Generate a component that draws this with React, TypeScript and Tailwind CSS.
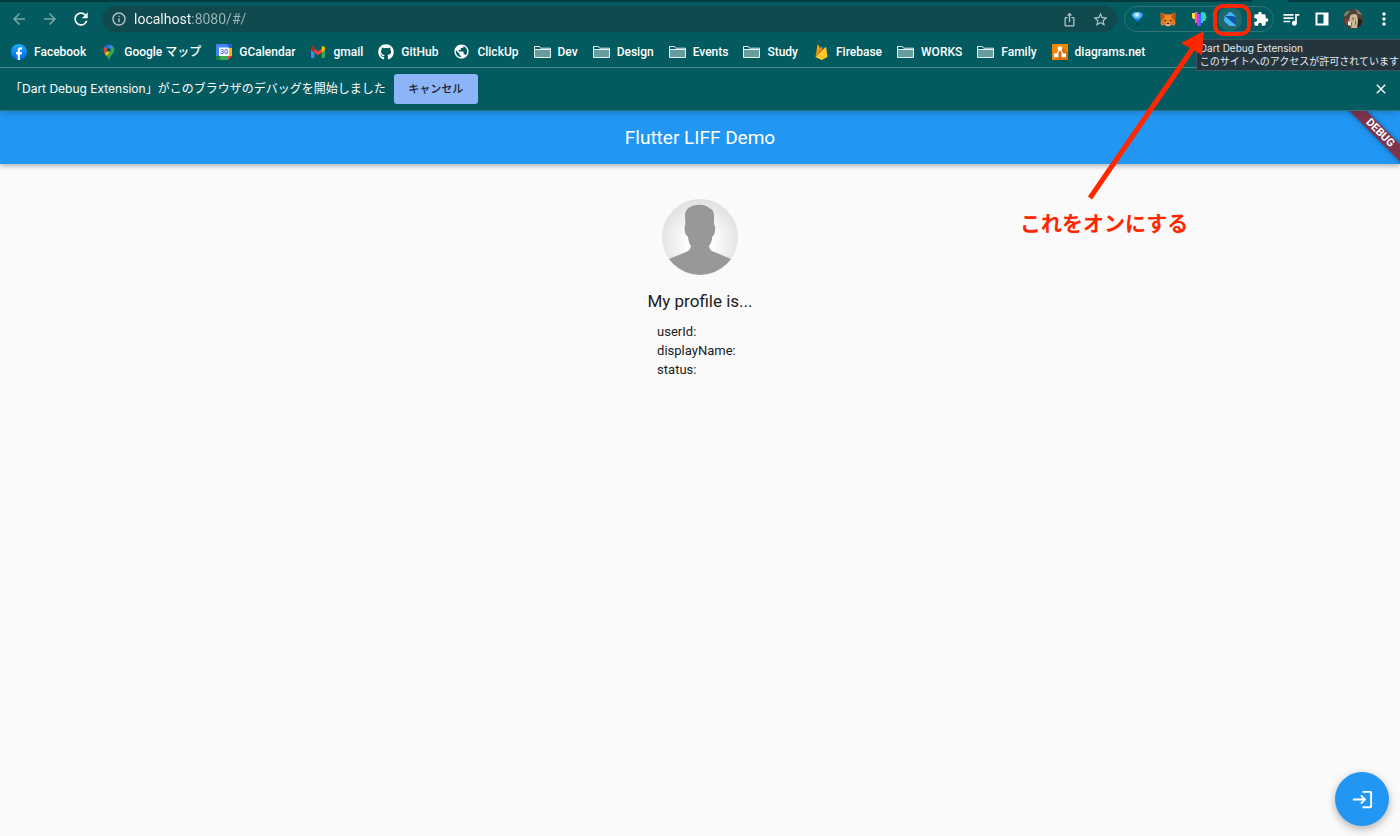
import type { ReactNode } from "react";
import { FaGithub } from "react-icons/fa";
import {
  MdArrowBack,
  MdArrowForward,
  MdClose,
  MdExtension,
  MdInfoOutline,
  MdIosShare,
  MdLogin,
  MdMoreVert,
  MdPublic,
  MdQueueMusic,
  MdRefresh,
  MdStarBorder,
} from "react-icons/md";

function FacebookIcon() {
  return (
    <svg viewBox="0 0 16 16" className="h-4 w-4">
      <defs>
        <linearGradient id="fb" x1="0" y1="0" x2="0" y2="1">
          <stop offset="0" stopColor="#19aefe" />
          <stop offset="1" stopColor="#0364e4" />
        </linearGradient>
      </defs>
      <circle cx="8" cy="8" r="8" fill="url(#fb)" />
      <path
        d="M6.7 16v-5.6H5V8h1.7V6.6c0-2.2 1.1-3.3 3.1-3.3.5 0 1 .1 1.3.2v2.1h-.9c-1 0-1.3.5-1.3 1.3V8H11l-.4 2.4H8.9V16z"
        fill="#fff"
      />
    </svg>
  );
}

function MapsIcon() {
  return (
    <svg viewBox="0 0 16 16" className="h-4 w-4">
      <path d="M3.6 9.2 11.9 2.3a5.4 5.4 0 0 1 1 5.8C11.9 10.4 9 11.9 8.3 15.5c-.1.5-.6.5-.7 0C7.2 12.8 5.1 11.2 3.6 9.2z" fill="#34a853" />
      <path d="M3.6 9.2 6.3 6.9 9.6 7.4 5.5 11.7A18 18 0 0 1 3.6 9.2z" fill="#fbbc04" />
      <path d="M3.7 2.6 6.4 5 3.6 9.2C2.1 6.9 2.3 4.2 3.7 2.6z" fill="#ea4335" />
      <path d="M3.7 2.6C5.2.8 7.6.1 9.6.8L6.4 5z" fill="#1a73e8" />
      <path d="M9.6.8c1 .3 1.8.9 2.4 1.6L8.9 5.9 6.4 5z" fill="#4285f4" />
      <circle cx="8" cy="5.9" r="1.9" fill="#035b60" />
    </svg>
  );
}

function CalendarIcon() {
  return (
    <svg viewBox="0 0 16 16" className="h-4 w-4">
      <path d="M1 0h11v4H4v8H0V1a1 1 0 0 1 1-1z" fill="#4285f4" />
      <path d="M12 0h3a1 1 0 0 1 1 1v3h-4z" fill="#1967d2" />
      <path d="M12 4h4v8h-4z" fill="#fbbc04" />
      <path d="M4 12h8v4H4z" fill="#34a853" />
      <path d="M0 12h4v4H1a1 1 0 0 1-1-1z" fill="#188038" />
      <path d="M12 12h4l-4 4z" fill="#ea4335" />
      <path d="M3 3.5h10V12H3z" fill="#fff" />
      <text x="8" y="10.3" textAnchor="middle" fontSize="7" fontWeight="700" fontFamily="Roboto, sans-serif" fill="#4285f4">
        30
      </text>
    </svg>
  );
}

function GmailIcon() {
  return (
    <svg viewBox="0 0 16 16" className="h-4 w-4">
      <path d="M1 4v9a1 1 0 0 0 1 1h2.3V6.5z" fill="#4285f4" />
      <path d="M15 4v9a1 1 0 0 1-1 1h-2.3V6.5z" fill="#34a853" />
      <path d="M4.3 4.6 8 7.4l3.7-2.8v3.8L8 11.2 4.3 8.4z" fill="#ea4335" />
      <path d="M1 4.1C1 2.4 2.8 1.6 4.1 2.5l.2.2v5.7L1 5.9z" fill="#c5221f" />
      <path d="M15 4.1c0-1.7-1.8-2.5-3.1-1.6l-.2.2v5.7L15 5.9z" fill="#fbbc04" />
    </svg>
  );
}

function FolderIcon() {
  return (
    <svg viewBox="0 0 17 16" className="h-4 w-[17px]">
      <path d="M.5 13.5v-11h5l1.2 1.7h9.8v9.3z" fill="#035b60" stroke="#e6f0f0" strokeWidth="1" />
      <path d="M1 6h15v7H1z" fill="#669c9e" />
      <path d="M.5 5.5h16" stroke="#e6f0f0" strokeWidth="1" />
    </svg>
  );
}

function FirebaseIcon() {
  return (
    <svg viewBox="0 0 16 16" className="h-4 w-4">
      <path d="M2.5 13 4.5.7c.1-.4.5-.4.7-.1l2.1 4z" fill="#ffa000" />
      <path d="M2.5 13 7.9 2.7c.2-.3.5-.3.7 0l1.3 2.6z" fill="#f57f17" />
      <path d="m2.5 13 9.9-9.8c.3-.3.7-.1.8.3L14.5 13l-5.3 2.8c-.4.2-.8.2-1.2 0z" fill="#ffca28" />
    </svg>
  );
}

function DiagramsIcon() {
  return (
    <svg viewBox="0 0 16 16" className="h-4 w-4">
      <path d="M0 0h16v16H0z" fill="#f08705" />
      <path d="m10 3 6 6v7H7l-5-3z" fill="#df6c0c" />
      <path d="M8 5 4.5 11M8 5l3.5 6" stroke="#fff" strokeWidth="1.3" />
      <path d="M5.8 2.5h4.4v3.7H5.8zM2 9.5h4.4v3.7H2zM9.6 9.5H14v3.7H9.6z" fill="#fff" />
    </svg>
  );
}

function BalloonIcon() {
  return (
    <svg viewBox="0 0 16 16" className="h-4 w-4">
      <defs>
        <radialGradient id="balloon" cx=".45" cy=".3" r=".6">
          <stop offset="0" stopColor="#fff" />
          <stop offset=".5" stopColor="#49b5f5" />
          <stop offset="1" stopColor="#0560bd" />
        </radialGradient>
      </defs>
      <path d="M2.5 3.5C3.5 1.5 6 1 8.500 1s5 .5 6 2.500c.3 2-4.500 5-5 7.500h-2c-.5-2.500-5.200-5.500-5-7.500z" fill="url(#balloon)" />
      <path d="M7.5 12h2l-.4 2.500H7.900z" fill="#0b3158" />
    </svg>
  );
}

function FoxIcon() {
  return (
    <svg viewBox="0 0 16 16" className="h-4 w-4">
      <path d="m.8 1.3 4.200 2h6l4.200-2 .4 4.200-.6 3.500.500 3-1.200 2.800-3.500-.8-1.600 1.200H6.800L5.200 14l-3.500.8L.5 12l.5-3-.6-3.500z" fill="#e2761b" />
      <path d="m.8 1.3 4 4-2.300 2.700-1.500.3-.6-3zM15.200 1.300l-4 4 2.300 2.700 1.500.3.600-3z" fill="#a85420" />
      <path d="m5 4.500 3-.3 3 .3.500 5-1.500 2.500H6L4.500 9.500z" fill="#f6851b" />
      <path d="M3.5 9 6 8.900l.3 1.500zM12.500 9 10 8.900l-.3 1.500z" fill="#233447" />
      <path d="M6 12h4l.6 2-.8.9H6.200L5.400 14z" fill="#d7c1b3" />
      <path d="M6.800 12h2.400v1.200H6.800z" fill="#161616" />
    </svg>
  );
}

function ColorBarsIcon() {
  return (
    <svg viewBox="0 0 16 16" className="h-4 w-4">
      <path d="M1 2h3v6H2L1 6z" fill="#ffe23d" />
      <path d="M4 1h2.5v11H4z" fill="#ff5aa5" />
      <path d="M6.5 3H8v12H6.5z" fill="#b44dff" />
      <path d="M8 3h2v12H8z" fill="#3b6bff" />
      <path d="M10 1h2v11h-2z" fill="#23c4ff" />
      <path d="M12 1.5h2L15.5 6 14 10h-2z" fill="#27e39b" />
    </svg>
  );
}

function DartIcon() {
  return (
    <svg viewBox="0 0 16 16" className="h-4 w-4">
      <path d="m2.500 5.500 4.500-4c.8-.6 1.800-.6 2.500 0L14 5.500V15H7.500L2 10z" fill="#40b6f6" />
      <path d="M3 5h7.500L14 6v8.500z" fill="#0a59a5" />
    </svg>
  );
}

function SidePanelIcon() {
  return (
    <svg viewBox="0 0 16 16" className="h-4 w-4">
      <path d="M1.5 1.5h13v13h-13z" fill="#fff" />
      <path d="M3.5 3.5h6v9h-6z" fill="#035b60" />
    </svg>
  );
}

function UserPhoto() {
  return (
    <svg viewBox="0 0 20 20" className="h-5 w-5">
      <clipPath id="photo">
        <circle cx="10" cy="10" r="10" />
      </clipPath>
      <g clipPath="url(#photo)">
        <path d="M0 0h20v20H0z" fill="#4d4236" />
        <path d="M0 2h7l-3 4-4 2zM12 0h6l2 6-5-1z" fill="#8b7f6b" />
        <path d="M2 11l3-2 1 6-3 1z" fill="#93412f" />
        <path d="M15 9l4 2-1 6-3 1z" fill="#241d18" />
        <path d="M7 7c1-2 5-3 7-1l1 5-1 8H8l1-5-3-2z" fill="#cbb793" />
        <path d="M5 12l3 1v4l-3-1z" fill="#e9e4da" />
        <path d="M9 8l2 1-1 3zM12 9l1 5-1 3z" fill="#72603f" />
      </g>
    </svg>
  );
}

function Avatar() {
  return (
    <svg viewBox="0 0 76 76" className="h-[76px] w-[76px]" role="img" aria-label="avatar">
      <defs>
        <radialGradient id="glow" cx=".5" cy=".55" r=".55">
          <stop offset=".3" stopColor="#fff" />
          <stop offset="1" stopColor="#e0e0e0" />
        </radialGradient>
        <clipPath id="round">
          <circle cx="38" cy="38" r="38" />
        </clipPath>
      </defs>
      <g clipPath="url(#round)">
        <path d="M0 0h76v76H0z" fill="url(#glow)" />
        <path
          d="M23 16c0-5 4-8.5 9-9.6 5-1.3 10-.9 14 1.6l2 1.500c3 .8 4 4 4 7.500v9c1.500.2 1.300 4 .8 7-.4 2.500-1.200 4.200-2.500 4.500-.3 4-1.300 7.500-3.500 9.500.3 2.500 2.200 5 5 5.800L69 60v16H7V60l17-7c3-.9 4.600-3.300 5-6-1.800-2-2.600-5.500-3-9.500-1.500-.3-2.500-2-3-4.500-.6-3-.8-6.700.4-7z"
          fill="#989898"
        />
      </g>
    </svg>
  );
}

const bookmarks: { label: string; icon: ReactNode }[] = [
  { label: "Facebook", icon: <FacebookIcon /> },
  { label: "Google マップ", icon: <MapsIcon /> },
  { label: "GCalendar", icon: <CalendarIcon /> },
  { label: "gmail", icon: <GmailIcon /> },
  { label: "GitHub", icon: <FaGithub className="h-4 w-4" /> },
  { label: "ClickUp", icon: <MdPublic className="h-[17px] w-[17px]" /> },
  { label: "Dev", icon: <FolderIcon /> },
  { label: "Design", icon: <FolderIcon /> },
  { label: "Events", icon: <FolderIcon /> },
  { label: "Study", icon: <FolderIcon /> },
  { label: "Firebase", icon: <FirebaseIcon /> },
  { label: "WORKS", icon: <FolderIcon /> },
  { label: "Family", icon: <FolderIcon /> },
  { label: "diagrams.net", icon: <DiagramsIcon /> },
];

const extensions: { label: string; icon: ReactNode; active?: boolean }[] = [
  { label: "Balloon", icon: <BalloonIcon /> },
  { label: "MetaMask", icon: <FoxIcon /> },
  { label: "Color bars", icon: <ColorBarsIcon /> },
  { label: "Dart Debug Extension", icon: <DartIcon />, active: true },
  { label: "Extensions", icon: <MdExtension className="h-4 w-4" /> },
];

function IconButton({
  label,
  className = "",
  children,
}: {
  label: string;
  className?: string;
  children: ReactNode;
}) {
  return (
    <button
      type="button"
      aria-label={label}
      className={`flex h-5 w-5 shrink-0 items-center justify-center rounded-full ${className}`}
    >
      {children}
    </button>
  );
}

function Toolbar() {
  return (
    <div className="flex items-center pt-1 pr-1.5 pl-[9px]">
      <div className="flex gap-[11px] pr-[11px]">
        <IconButton label="Back" className="text-[#7ba5a8]">
          <MdArrowBack className="h-[18px] w-[18px]" />
        </IconButton>
        <IconButton label="Forward" className="text-[#7ba5a8]">
          <MdArrowForward className="h-[18px] w-[18px]" />
        </IconButton>
        <IconButton label="Reload">
          <MdRefresh className="h-5 w-5" />
        </IconButton>
      </div>

      <div className="flex h-[26px] flex-1 items-center rounded-full bg-[#10494e] pr-[7px] pl-[9px] text-[#b7c8ca]">
        <MdInfoOutline className="h-4 w-4 shrink-0" />
        <input
          aria-label="Address"
          defaultValue="localhost:8080/#/"
          className="ml-[7px] min-w-0 flex-1 bg-linear-to-r from-white from-[57px] to-[#9fb6b8] to-[57px] bg-clip-text font-['Roboto',sans-serif] text-sm text-transparent outline-none"
        />
        <div className="flex gap-[11px]">
          <IconButton label="Share">
            <MdIosShare className="h-[15px] w-[15px]" />
          </IconButton>
          <IconButton label="Bookmark">
            <MdStarBorder className="h-[17px] w-[17px]" />
          </IconButton>
        </div>
      </div>

      <div className="ml-[7px] flex h-[26px] items-center gap-[11px] rounded-full border border-[#2f7478] px-0.5">
        {extensions.map((e) => (
          <IconButton
            key={e.label}
            label={e.label}
            className={e.active ? "bg-[#1f686d] ring-2 ring-[#1f686d]" : ""}
          >
            {e.icon}
          </IconButton>
        ))}
      </div>

      <div className="ml-[7px] flex gap-[11px]">
        <IconButton label="Media">
          <MdQueueMusic className="h-5 w-5" />
        </IconButton>
        <IconButton label="Side panel">
          <SidePanelIcon />
        </IconButton>
        <IconButton label="Profile">
          <UserPhoto />
        </IconButton>
        <IconButton label="Menu">
          <MdMoreVert className="h-5 w-5" />
        </IconButton>
      </div>
    </div>
  );
}

function Bookmarks() {
  return (
    <nav className="flex h-9 items-center gap-[15px] border-b border-[#4a888b] pt-1 pl-[11px] font-['Roboto','Noto_Sans_CJK_JP',sans-serif] text-xs font-medium whitespace-nowrap">
      {bookmarks.map((b) => (
        <a key={b.label} href="#" className="flex items-center gap-[7px]">
          {b.icon}
          {b.label}
        </a>
      ))}
    </nav>
  );
}

function InfoBar() {
  return (
    <div className="flex h-[43px] items-center border-b border-[#2f7478] pr-[9px] pl-[10px] text-xs">
      <p>「Dart Debug Extension」がこのブラウザのデバッグを開始しました</p>
      <button
        type="button"
        className="ml-2 h-[30px] w-[84px] rounded-[3px] bg-[#8cb4f9] text-[11px] font-medium text-[#202124]"
      >
        キャンセル
      </button>
      <IconButton label="Close" className="ml-auto">
        <MdClose className="h-4 w-4" />
      </IconButton>
    </div>
  );
}

/* red box, arrow and caption drawn over the window */
function Annotation() {
  return (
    <div className="pointer-events-none absolute top-0 right-0 z-20 w-[400px]">
      <svg viewBox="0 0 400 210" className="h-[210px] w-[400px]">
        <rect x="215" y="6" width="34" height="28" rx="8" fill="none" stroke="#ff2600" strokeWidth="4" />
        <path d="M90 198 193 48" stroke="#ff2600" strokeWidth="5" />
        <path d="m204 31-23 12 21 12z" fill="#ff2600" />
      </svg>
      <p className="pl-5 text-[21px] leading-7 font-bold text-[#ff2600]">これをオンにする</p>
    </div>
  );
}

export default function App() {
  return (
    <div className="relative flex min-h-screen flex-col overflow-hidden bg-[#fafafa] font-['Inter','Noto_Sans_CJK_JP',sans-serif]">
      <header className="relative z-10 bg-[#035b60] text-white shadow-md">
        <div className="flex h-0.5 justify-end">
          <div className="flex-1 bg-[#04393f]" />
          <div className="w-9" />
          <div className="w-28 bg-[#04393f]" />
        </div>
        <Toolbar />
        <Bookmarks />
        <InfoBar />
        <div
          role="tooltip"
          className="absolute top-[39px] right-0 border-y border-l border-[#3d5560] bg-[#24353d] py-0.5 pr-px pl-[3px] text-[10px] leading-[13px] whitespace-nowrap text-[#e8eaed]"
        >
          <div>Dart Debug Extension</div>
          <div>このサイトへのアクセスが許可されています</div>
        </div>
      </header>

      <div className="relative flex flex-1 flex-col font-['Roboto',sans-serif] text-[#212121]">
        <div className="relative flex h-[53px] items-center justify-center overflow-hidden bg-[#2196f3] pt-0.5 text-white shadow-[0_2px_5px_rgba(0,0,0,0.3)]">
          <h1 className="text-[19px]">Flutter LIFF Demo</h1>
          <div className="absolute top-4 -right-10 w-[120px] rotate-45 bg-[#7d344d] text-center text-[11px] leading-3 font-bold shadow-[0_0_5px_rgba(0,0,0,0.4)]">
            DEBUG
          </div>
        </div>

        <main className="flex flex-col items-center pt-[35px]">
          <Avatar />
          <h2 className="mt-[14px] text-[17px] leading-6">My profile is...</h2>
          <div className="mt-[9px] pr-1 text-[13px] leading-[19px] whitespace-pre">
            <p>userId: </p>
            <p>displayName: </p>
            <p>status: </p>
          </div>
        </main>

        <button
          type="button"
          aria-label="Log in"
          className="absolute right-[11px] bottom-[10px] flex h-[54px] w-[54px] items-center justify-center rounded-full bg-[#2196f3] text-white shadow-[0_3px_8px_rgba(0,0,0,0.3)]"
        >
          <MdLogin className="h-[23px] w-[23px]" />
        </button>
      </div>

      <Annotation />
    </div>
  );
}
